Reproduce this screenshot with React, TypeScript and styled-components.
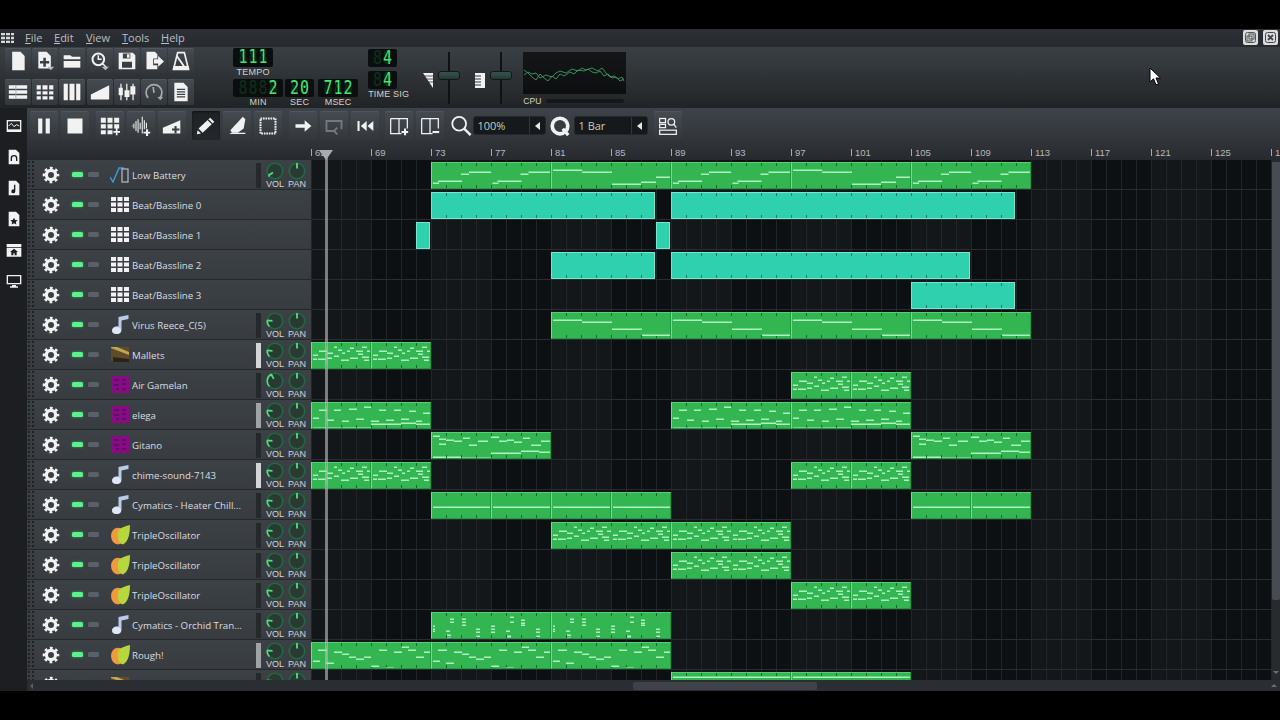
import React from 'react';
import styled, { createGlobalStyle } from 'styled-components';

const GlobalStyle = createGlobalStyle`
  html,
  body,
  #root {
    margin: 0;
    height: 100%;
    background: #000;
    overflow: hidden;
  }

  body {
    font-family: 'Open Sans', 'Liberation Sans', sans-serif;
    color: #c8cdd0;
  }
`;

const BAR = 15;

/* ---------- shell ---------- */

const Page = styled.div`
  position: relative;
  width: 1280px;
  height: 720px;
  padding: 29px 0;
  box-sizing: border-box;
  background: #000;
`;

const Window = styled.div`
  height: 662px;
  display: flex;
  flex-direction: column;
  background: #1d2023;
`;

const MenuBar = styled.div`
  height: 18px;
  flex-shrink: 0;
  box-sizing: border-box;
  display: flex;
  align-items: center;
  background: linear-gradient(#2d3135, #26292d);
  padding: 0 0 1px 1px;
`;

const MenuGrip = styled.div`
  width: 13px;
  height: 10px;
  margin-right: 11px;
  background:
    linear-gradient(90deg, transparent 4px, #26292d 4px, #26292d 5px, transparent 5px, transparent 9px, #26292d 9px, #26292d 10px, transparent 10px),
    repeating-linear-gradient(#d8d8d8 0 2px, #5a5d60 2px 4px);
`;

const MenuItem = styled.span<{ $width: number }>`
  width: ${(p) => p.$width}px;
  font-size: 11px;
  color: #b9bfc3;

  u {
    text-underline-offset: 1px;
  }
`;

const WindowButtons = styled.div`
  margin-left: auto;
  margin-right: 2px;
  display: flex;
  gap: 5px;
`;

const WindowButton = styled.div`
  width: 15px;
  height: 15px;
  border-radius: 2px;
  background: #d9dbdc;
  display: flex;
  align-items: center;
  justify-content: center;
`;

const TopBar = styled.div`
  height: 61px;
  flex-shrink: 0;
  box-sizing: border-box;
  display: flex;
  padding: 1px 0 0 5px;
  background: linear-gradient(#3a3f44, #33383c 30%, #212427);
`;

const ButtonGrid = styled.div`
  display: grid;
  grid-template-columns: repeat(7, 26px);
  grid-template-rows: 25px 26px;
  column-gap: 1.2px;
  row-gap: 6px;
`;

const IconButton = styled.div<{ $active?: boolean }>`
  box-sizing: border-box;
  display: flex;
  align-items: center;
  justify-content: center;
  border-radius: 2px;
  background: ${(p) => (p.$active ? 'linear-gradient(#1f2225, #24272b)' : 'linear-gradient(#454b51, #33373c)')};
  box-shadow: ${(p) => (p.$active ? 'inset 0 1px 2px #111' : 'inset 0 1px 0 #50565c')};
`;

/* ---------- lcd ---------- */

const LcdColumn = styled.div`
  margin-left: 39px;
  width: 125px;
  display: flex;
  flex-direction: column;
`;

const LcdRow = styled.div`
  display: flex;
  gap: 2px;
  margin-top: 2px;
`;

const LcdUnit = styled.div<{ $width: number }>`
  width: ${(p) => p.$width}px;
  margin-right: ${(p) => (p.$width === 29 ? 2 : 0)}px;
  display: flex;
  flex-direction: column;
  align-items: center;
`;

const LcdLabel = styled.span`
  font-family: 'Liberation Sans', sans-serif;
  font-size: 9px;
  line-height: 10px;
  letter-spacing: 0.2px;
  color: #d5d3c4;
`;

const LcdBox = styled.div<{ $height: number }>`
  align-self: stretch;
  height: ${(p) => p.$height}px;
  border-radius: 2px;
  background: #0b0e0e;
  display: flex;
  align-items: center;
  justify-content: center;
`;

const Digit = styled.span`
  position: relative;
  width: 10px;
  height: 13px;
  font-family: 'DejaVu Sans Mono', monospace;
  font-size: 15px;
  line-height: 13px;
  text-align: center;
  color: #45e36f;
  transform: scaleY(1.3);

  &::before {
    content: '8';
    position: absolute;
    left: 0;
    right: 0;
    z-index: -1;
    color: #10301d;
  }
`;

const Lcd = ({ digits, ghosts, height }: { digits: string; ghosts: number; height: number }) => (
  <LcdBox $height={height}>
    {Array.from({ length: ghosts }, (_, i) => (
      <Digit key={i} />
    ))}
    {digits.split('').map((d, i) => (
      <Digit key={i}>{d}</Digit>
    ))}
  </LcdBox>
);

const TimeSig = styled.div`
  margin-left: 10px;
  width: 29px;
  padding-top: 1px;
  display: flex;
  flex-direction: column;
  align-items: stretch;
  gap: 4px;
`;

const TimeSigLabel = styled(LcdLabel)`
  margin-top: -4px;
  white-space: nowrap;
`;

const FaderGroup = styled.div`
  margin-left: 26px;
  padding-top: 4px;
  display: flex;
  align-items: flex-start;
`;

const FaderIcon = styled.div`
  width: 10px;
  margin-top: 19px;
  margin-right: 5px;
`;

const Fader = styled.div`
  width: 22px;
  height: 52px;
  margin-right: 15px;
  padding-top: 19px;
  box-sizing: border-box;
  background: linear-gradient(#0f1113, #0f1113) center / 2px 100% no-repeat;
`;

const FaderHandle = styled.div`
  height: 9px;
  border-radius: 3px;
  border: 1px solid #14171a;
  box-sizing: border-box;
  background: linear-gradient(#3e4f49, #2a4c40 50%, #27332f);
`;

const CpuColumn = styled.div`
  margin-left: -4px;
  padding-top: 4px;
  width: 103px;
`;

const CpuGraph = styled.div`
  height: 42px;
  background: linear-gradient(#141618, #0c0e10);
`;

const CpuRow = styled.div`
  margin-top: 2px;
  display: flex;
  align-items: center;
  gap: 4px;
`;

const CpuLabel = styled(LcdLabel)`
  font-size: 8.5px;
`;

const CpuBar = styled.div`
  flex: 1;
  height: 4px;
  margin-right: 2px;
  border-radius: 2px;
  background: #15181a;
`;

/* ---------- body ---------- */

const Body = styled.div`
  flex: 1;
  min-height: 0;
  display: flex;
`;

const SideBar = styled.div`
  width: 27px;
  flex-shrink: 0;
  padding-top: 10px;
  box-sizing: border-box;
  background: #1c1e21;
  display: flex;
  flex-direction: column;
  align-items: center;
  gap: 15px;
`;

const Editor = styled.div`
  position: relative;
  flex: 1;
  min-width: 0;
  display: flex;
  flex-direction: column;
`;

const Dock = styled.div`
  height: 52px;
  flex-shrink: 0;
  background: linear-gradient(#3e4349, #33373c 55%, #26292d);
`;

const EditToolbar = styled.div`
  height: 37px;
  box-sizing: border-box;
  padding: 3px 0 0 3px;
  display: flex;
  align-items: flex-start;
  gap: 6.5px;
`;

const ToolGroup = styled.div`
  display: flex;
  gap: 3px;
`;

const ToolButton = styled(IconButton)`
  width: 28px;
  height: 29px;
`;

const ToolGlyph = styled.div<{ $width: number }>`
  width: ${(p) => p.$width}px;
  height: 29px;
  display: flex;
  align-items: center;
  justify-content: center;
`;

const ComboRow = styled.div`
  display: flex;
  align-items: flex-start;
  gap: 1px;
  margin-left: -1px;
`;

const Combo = styled.div<{ $width: number }>`
  width: ${(p) => p.$width}px;
  height: 19px;
  margin-top: 5px;
  box-sizing: border-box;
  display: flex;
  align-items: center;
  border-radius: 3px;
  border: 1px solid #24272b;
  background: #16191c;
  font-size: 11px;
  color: #c5cfb8;
  padding-left: 4px;
`;

const ComboArrow = styled.div`
  margin-left: auto;
  width: 15px;
  height: 100%;
  border-left: 1px solid #33373b;
  display: flex;
  align-items: center;
  justify-content: center;

  &::before {
    content: '';
    border: 4px solid transparent;
    border-left-width: 0;
    border-right: 5px solid #e6e6e6;
  }
`;

const Ruler = styled.div`
  height: 15px;
  padding-left: 284px;
  display: flex;
  overflow: hidden;
`;

const RulerMark = styled.div`
  width: 60px;
  flex-shrink: 0;
  display: flex;
  align-items: center;
  gap: 3px;
  font-family: 'Liberation Sans', sans-serif;
  font-size: 9.5px;
  color: #b4b9bc;

  &::before {
    content: '';
    width: 1px;
    height: 7px;
    background: #a6abae;
  }
`;

const Playhead = styled.div`
  position: absolute;
  left: 298px;
  top: 42px;
  bottom: 11px;
  width: 3px;
  background: rgba(190, 190, 190, 0.6);
  pointer-events: none;

  &::before {
    content: '';
    position: absolute;
    left: -6px;
    top: 0;
    border-left: 7.5px solid transparent;
    border-right: 7.5px solid transparent;
    border-top: 10px solid #a9acae;
  }
`;

const TrackArea = styled.div`
  flex: 1;
  min-height: 0;
  display: flex;
`;

const TrackList = styled.div`
  flex: 1;
  min-width: 0;
  overflow: hidden;
`;

const TrackRow = styled.div`
  height: 30px;
  display: flex;
`;

const TrackHeader = styled.div`
  width: 284px;
  flex-shrink: 0;
  box-sizing: border-box;
  display: flex;
  align-items: center;
  background: linear-gradient(#3c4146, #383c41);
  border-bottom: 1px solid #25282b;
`;

const Grip = styled.div`
  width: 8px;
  height: 100%;
  flex-shrink: 0;
  background: radial-gradient(circle, #1f2225 1px, transparent 1.2px) 0 0 / 4px 4px;
`;

const GearSlot = styled.div`
  width: 32px;
  flex-shrink: 0;
  display: flex;
  justify-content: center;
`;

const Led = styled.div<{ $on?: boolean }>`
  width: 11px;
  height: 5px;
  flex-shrink: 0;
  margin-left: 5px;
  border-radius: 1.5px;
  background: ${(p) => (p.$on ? '#5df08c' : '#596067')};
  box-shadow: ${(p) => (p.$on ? '0 0 3px #2ea65a' : 'none')};
`;

const TrackIcon = styled.div`
  width: 20px;
  height: 20px;
  margin-left: 11px;
  flex-shrink: 0;
  display: flex;
  align-items: center;
  justify-content: center;
`;

const TrackName = styled.div`
  width: 124px;
  margin-left: 2px;
  padding-top: 1px;
  flex-shrink: 0;
  font-size: 9.7px;
  white-space: nowrap;
  overflow: hidden;
  color: #d9dde0;
`;

const Meter = styled.div<{ $level: number }>`
  width: 5px;
  height: 25px;
  margin-top: 1px;
  flex-shrink: 0;
  background: ${(p) => (p.$level > 0.8 ? '#d3d5d6' : p.$level > 0 ? '#a0a2a4' : '#26292c')};
`;

const KnobGroup = styled.div`
  margin-left: 3px;
  display: flex;
`;

const Knob = styled.div`
  width: 22px;
  height: 29px;
  padding-top: 2px;
  box-sizing: border-box;
  flex-shrink: 0;
  display: flex;
  flex-direction: column;
  align-items: center;
`;

const KnobLabel = styled.span`
  font-family: 'Liberation Sans', sans-serif;
  font-size: 9px;
  line-height: 9px;
  color: #cfd5d6;
`;

const Lane = styled.div`
  flex: 1;
  box-sizing: border-box;
  padding: 2px 0 1px;
  display: grid;
  grid-template-columns: repeat(64, ${BAR}px);
  background:
    linear-gradient(#2a2d30, #2a2d30) 0 100% / 100% 1px no-repeat,
    linear-gradient(90deg, #222528 1px, transparent 1px) 0 0 / ${BAR}px 100%,
    repeating-linear-gradient(90deg, #14171a 0 60px, #0d1012 60px 120px);
`;

const ClipBox = styled.div<{ $start: number; $span: number; $teal: boolean }>`
  grid-row: 1;
  grid-column: ${(p) => p.$start + 1} / span ${(p) => p.$span};
  height: 27px;
  box-sizing: border-box;
  margin-right: ${(p) => (p.$teal ? 1 : 0)}px;
  background: ${(p) => (p.$teal ? '#2fd0ae' : '#33b652')};
  border: 1px solid ${(p) => (p.$teal ? '#74e6cf' : '#1f9a41')};
  border-left-color: ${(p) => (p.$teal ? '#74e6cf' : '#66e586')};
  border-top-color: ${(p) => (p.$teal ? '#74e6cf' : '#54cf72')};
  overflow: hidden;
`;

const VScroll = styled.div`
  width: 8px;
  flex-shrink: 0;
  background: #282b2e;
  display: flex;
  flex-direction: column;
  align-items: center;
`;

const VThumb = styled.div`
  width: 8px;
  height: 438px;
  margin-top: 2px;
  margin-bottom: 71px;
  border-radius: 0 0 2px 2px;
  background: #474c52;
`;

const VArrow = styled.div`
  border: 3px solid transparent;
  border-bottom-width: 0;
  border-top: 3px solid #6a6e72;
`;

const HScroll = styled.div`
  height: 11px;
  flex-shrink: 0;
  padding: 0 3px;
  display: flex;
  align-items: center;
  background: #2a2d31;
`;

const HThumb = styled.div`
  margin-left: 600px;
  width: 184px;
  height: 8px;
  border-radius: 2px;
  background: #3f4349;
`;

const ScrollArrow = styled.div`
  border: 3px solid transparent;
  border-left-width: 0;
  border-right: 3px solid #5b5f63;
`;

const ScrollArrowEnd = styled.div`
  margin-left: auto;
  border: 3px solid transparent;
  border-top-width: 0;
  border-bottom: 3px solid #6a6e72;
`;

const Pointer = styled.svg`
  position: absolute;
  left: 1149px;
  top: 67px;
`;

/* ---------- icons ---------- */

const W = '#f2f2f2';
const D = '#3a3f44';

const Svg = ({ size = 20, children }: { size?: number; children: React.ReactNode }) => (
  <svg width={size} height={size} viewBox="0 0 24 24">
    {children}
  </svg>
);

const ICONS: Record<string, React.ReactNode> = {
  doc: <path fill={W} d="M5 1h10l5 5v17H5z" />,
  docPlus: (
    <>
      <path fill={W} d="M4 1h10l5 5v15H4z" />
      <path fill={D} d="M10 8h3v4h4v3h-4v4h-3v-4H6v-3h4z" />
      <path fill="#b8bcc0" d="M15 19h8l-4 4z" />
    </>
  ),
  folder: (
    <>
      <path fill={W} d="M2 5h8l2 2h10v3H2z" />
      <path fill={W} d="M2 12h20v8H2z" />
    </>
  ),
  recent: (
    <>
      <circle cx="10" cy="10" r="7" fill="none" stroke={W} strokeWidth="2.4" />
      <path fill="none" stroke={W} strokeWidth="1.8" d="M10 5v5h4M15 15l5 5" />
      <path fill="#b8bcc0" d="M14 19h9l-4.500 4z" />
    </>
  ),
  save: (
    <path
      fill={W}
      fillRule="evenodd"
      d="M2 2h17l3 3v17H2zM7 3v6h9V3zM6 13v7h12v-7zM12 4h3v4h-3z"
    />
  ),
  export: (
    <>
      <path fill={W} d="M3 1h10l3 3v5h-5v8h5v5H3z" />
      <path fill={W} d="M12 10h5V6l7 6.500-7 6.500v-4h-5z" />
    </>
  ),
  metronome: (
    <>
      <path fill="none" stroke={W} strokeWidth="2" d="M8 2h8l5 20H3z" />
      <path fill={W} d="M3 18h18l1 4H2z" />
      <path stroke={W} strokeWidth="2.200" d="M7 6l9 13" />
    </>
  ),
  song: (
    <>
      <path fill={W} d="M1 4h22v4H1zM1 10h22v4H1zM1 16h22v4H1z" />
      <path fill="#9ea2a6" d="M9 4h1v16H9z" />
    </>
  ),
  bb: <path fill={W} d="M2 4h5v5H2zM9 4h6v5H9zM17 4h5v5h-5zM2 11h5v4H2zM9 11h6v4H9zM17 11h5v4h-5zM2 17h5v4H2zM9 17h6v4H9zM17 17h5v4h-5z" />,
  piano: <path fill={W} d="M2 2h5v20H2zM9 2h6v20H9zM17 2h5v20h-5z" />,
  ramp: <path fill={W} d="M1 15L23 4v17H1z" />,
  mixer: (
    <path
      fill={W}
      d="M4 2h1.500v5H7v9H5.500v6H4v-6H2V7h2zM11 2h1.500v8H15v8h-2.500v4H11v-4H9v-8h2zM18.500 2H20v3h2v10h-2v7h-1.500v-7H16V5h2.500z"
    />
  ),
  gauge: (
    <>
      <path fill="none" stroke="#a6abaf" strokeWidth="2" d="M5 19a9.500 9.500 0 1 1 14 0" />
      <path fill="none" stroke="#a6abaf" strokeWidth="2" d="M12 13l-1-7" />
      <path fill="#a6abaf" d="M16 18h7l-3.500 4z" />
    </>
  ),
  notes: (
    <path
      fill={W}
      fillRule="evenodd"
      d="M4 1h11l5 5v17H4zM7 8v1.500h10V8zM7 11v1.500h10V11zM7 14v1.500h10V14zM7 17v1.500h10V17z"
    />
  ),
  pause: <path fill={W} d="M5 3h5v18H5zM14 3h5v18h-5z" />,
  stop: <path fill={W} d="M3 3h18v18H3z" />,
  bbPlus: (
    <path
      fill={W}
      d="M1 2h6v6H1zM9 2h6v6H9zM17 2h6v6h-6zM1 10h6v5H1zM9 10h6v5H9zM17 10h6v5h-6zM1 17h6v5H1zM9 17h6v5H9zM19 15h2v3h3v2h-3v3h-2v-3h-3v-2h3z"
    />
  ),
  wavePlus: (
    <>
      <path
        fill="none"
        stroke={W}
        strokeWidth="1.300"
        d="M1 12h1M3.500 9v6M6 6v12M8.500 4v16M11 8v8M13.500 1v20M16 5v11M18.500 8v7"
      />
      <path fill={W} d="M18 16h2.500v3H23v2h-2.500v3H18v-3h-3v-2h3z" />
    </>
  ),
  rampPlus: (
    <>
      <path fill={W} d="M1 14L22 5v16H1z" />
      <path fill={D} d="M15 12h2.500v3H21v2.500h-3.500V21H15v-3.500h-3V15h3z" />
    </>
  ),
  pencil: (
    <>
      <path fill={W} d="M17 2l5 5L8 20l-5-5z" />
      <path fill={W} d="M1 22l1-5 4 4z" />
      <path stroke="#1f2225" strokeWidth="1.500" d="M14.500 4.500l5 5" />
    </>
  ),
  eraser: (
    <>
      <path fill={W} d="M19 1l3 3-2 11-7 5H6l-2-3z" />
      <path fill={W} d="M1 23l4-3h17v1.500H3z" />
    </>
  ),
  select: <rect x="3" y="3" width="18" height="18" fill="none" stroke={W} strokeWidth="2.400" strokeDasharray="2 1" />,
  arrow: <path fill={W} d="M3 10h11V5l8 7-8 7v-5H3z" />,
  loop: (
    <path
      fill="none"
      stroke="#74797d"
      strokeWidth="2.200"
      d="M21 16V6H3v12h10M16 14l-4 4 4 4"
    />
  ),
  skip: <path fill={W} d="M3 6h2.500v12H3zM14 6v12l-7-6zM22 6v12l-7-6z" />,
  addBar: (
    <>
      <path fill="none" stroke={W} strokeWidth="1.500" d="M2 3h20v12M12 3v18M2 3v18h13" />
      <path fill={W} d="M18 15h2.500v3H23v2.500h-2.500V23H18v-2.500h-3V18h3z" />
    </>
  ),
  removeBar: (
    <>
      <path fill="none" stroke={W} strokeWidth="1.500" d="M2 3h20v12M12 3v18M2 3v18h13" />
      <path fill={W} d="M15 18h8v2.500h-8z" />
    </>
  ),
  magnifier: (
    <>
      <circle cx="10" cy="10" r="7.500" fill="none" stroke={W} strokeWidth="2" />
      <path stroke={W} strokeWidth="2.600" d="M15.500 15.500l7 7" />
    </>
  ),
  quantize: (
    <>
      <circle cx="12" cy="12" r="8.500" fill="none" stroke={W} strokeWidth="4" />
      <path stroke={W} strokeWidth="3.500" d="M15 15l6 7" />
    </>
  ),
  stack: (
    <>
      <rect x="2" y="3" width="7" height="5" fill="none" stroke={W} strokeWidth="1.500" />
      <rect x="2" y="10" width="7" height="4" fill="none" stroke={W} strokeWidth="1.500" />
      <rect x="2" y="17" width="20" height="5" fill="none" stroke={W} strokeWidth="1.500" />
      <circle cx="16" cy="7" r="4" fill="none" stroke={W} strokeWidth="1.500" />
      <path stroke={W} strokeWidth="1.500" d="M19 10l3 4" />
    </>
  ),
};

const Gear = () => (
  <svg width="18" height="18" viewBox="0 0 18 18">
    <circle cx="9" cy="9" r="4.600" fill="none" stroke={W} strokeWidth="3.200" />
    <circle
      cx="9"
      cy="9"
      r="7"
      fill="none"
      stroke={W}
      strokeWidth="2.600"
      strokeDasharray="2.750 2.750"
      strokeDashoffset="1.370"
    />
  </svg>
);

const NoteIcon = () => (
  <svg width="19" height="20" viewBox="0 0 18 20">
    <path fill="#b9cbe8" d="M7 2l10-2v4l-7 1.500V15a4.500 3.800 0 1 1-3-3.500z" />
    <ellipse cx="5" cy="15.500" rx="4.500" ry="3.500" fill="#dfe7f5" />
  </svg>
);

const BeatIcon = () => (
  <svg width="18" height="15" viewBox="0 0 18 15">
    <path fill={W} d="M0 0h5v4H0zM6.500 0h5v4h-5zM13 0h5v4h-5zM0 5.500h5v4H0zM6.500 5.500h5v4h-5zM13 5.500h5v4h-5zM0 11h5v4H0zM6.500 11h5v4h-5zM13 11h5v4h-5z" />
  </svg>
);

const AutomationIcon = () => (
  <svg width="20" height="16" viewBox="0 0 20 16">
    <path fill="none" stroke="#3d9bd6" strokeWidth="1.400" d="M0 10l3 5L9 1h5" />
    <rect x="12" y="2" width="6" height="13" fill="none" stroke="#b6bdc2" strokeWidth="1.200" />
  </svg>
);

const MalletsIcon = () => (
  <svg width="18" height="17" viewBox="0 0 18 17">
    <rect width="18" height="14" y="1" fill="#5e4c2c" />
    <path fill="#c4a550" d="M0 2l18 7V6L6 1H0z" />
    <path fill="#2a2418" d="M2 11l16 2v3H2z" />
  </svg>
);

const GamelanIcon = () => (
  <svg width="18" height="17" viewBox="0 0 18 17">
    <rect width="18" height="17" fill="#8a0a86" />
    <path fill="#5a1262" d="M3 3h5v2H3zM3 8h5v2H3zM11 3h4v2h-4zM11 7h4v2h-4zM5 12h3v2H5zM11 12h4v2h-4z" />
  </svg>
);

const TripleIcon = () => (
  <svg width="19" height="20" viewBox="0 0 18 19">
    <ellipse cx="6.500" cy="10.500" rx="6.500" ry="8" fill="#ee9a3d" />
    <path fill="#b7d83d" d="M18 0c0 9-2 17-7 18.500C6 17 5 8 8 4c3-2 6-3 10-4z" />
  </svg>
);

const polar = (angle: number, radius: number) => {
  const a = ((angle - 90) * Math.PI) / 180;
  return `${(9 + radius * Math.cos(a)).toFixed(2)} ${(9 + radius * Math.sin(a)).toFixed(2)}`;
};

const Dial = ({ angle, arc }: { angle: number; arc: boolean }) => (
  <svg width="18" height="18" viewBox="0 0 18 18" style={{ flexShrink: 0 }}>
    <circle cx="9" cy="9" r="7.800" fill="#2a3a33" stroke="#1e6a42" strokeWidth="1.600" />
    {arc && <path fill="none" stroke="#4fe07f" strokeWidth="1.600" d={`M${polar(-135, 7.8)}A7.800 7.800 0 0 1 ${polar(angle, 7.8)}`} />}
    <path stroke="#4fe07f" strokeWidth="1.800" d={`M${polar(angle, 8)}L${polar(angle, 2.5)}`} />
  </svg>
);

const Knobs = ({ volume, labels }: { volume: number; labels: boolean }) => (
  <KnobGroup>
    <Knob>
      <Dial angle={volume} arc />
      {labels && <KnobLabel>VOL</KnobLabel>}
    </Knob>
    <Knob>
      <Dial angle={0} arc={false} />
      {labels && <KnobLabel>PAN</KnobLabel>}
    </Knob>
  </KnobGroup>
);

/* ---------- clip content ---------- */

type Note = [number, number, number];

const repeat = (notes: Note[], times: number, step: number): Note[] =>
  Array.from({ length: times }).flatMap((_, i) => notes.map(([x, y, w]): Note => [x + i * step, y, w]));

const LEAD_A: Note[] = repeat([[1, 21, 6], [6, 19, 24], [29, 12, 8], [37, 10, 22]], 2, 59.5);
const LEAD_B: Note[] = [[1, 8, 29], [30, 10, 30], [60, 22, 29], [89, 20, 15], [104, 15, 14]];
const REECE: Note[] = [[1, 8, 29], [30, 10, 30], [60, 17, 30], [90, 23, 28]];

const DENSE_SET: Note[] = [
  [1, 13, 5], [7, 9, 8], [15, 11, 6], [1, 17, 4], [6, 17, 8], [15, 16, 5], [22, 5, 3], [26, 8, 4], [30, 11, 3],
  [35, 9, 3], [38, 6, 4], [44, 9, 7], [50, 5, 5], [22, 14, 5], [29, 18, 8], [38, 16, 8], [46, 12, 5], [50, 15, 7],
  [55, 9, 4], [52, 18, 5],
];

const ELEGA: Note[] = [
  [1, 16, 6], [7, 8, 8], [15, 18, 7], [22, 8, 7], [30, 19, 7], [37, 7, 8], [44, 17, 8], [52, 5, 7], [59, 19, 8],
  [67, 8, 7], [74, 18, 8], [82, 8, 7], [89, 17, 8], [97, 9, 7], [104, 19, 6], [111, 11, 7], [1, 26, 14], [16, 26, 14],
  [31, 26, 13], [45, 26, 14], [59, 22, 30], [89, 21, 15], [104, 22, 14],
];

const GITANO: Note[] = [
  [1, 4, 7], [7, 7, 7], [14, 8, 8], [7, 12, 7], [22, 9, 8], [31, 6, 7], [37, 13, 8], [46, 9, 10], [59, 5, 8], [67, 9, 8],
  [75, 8, 7], [82, 10, 8], [91, 6, 7], [99, 13, 10], [109, 9, 9], [1, 25, 13], [15, 25, 14], [30, 26, 14], [45, 26, 14],
  [59, 21, 30], [89, 19, 18], [107, 20, 11],
];

const STACKS: Note[] = [
  [1, 14, 2], [1, 17, 2], [1, 19, 2], [14, 19, 4], [15, 23, 4], [15, 26, 4], [18, 7, 4], [18, 10, 4], [30, 7, 4], [30, 10, 4],
  [30, 13, 4], [44, 17, 4], [44, 20, 4], [44, 24, 4], [59, 14, 4], [59, 17, 4], [59, 20, 4], [74, 19, 4], [75, 24, 4],
  [75, 26, 4], [78, 5, 4], [78, 10, 4], [89, 8, 4], [89, 11, 4], [89, 13, 4], [104, 17, 4], [104, 20, 4], [104, 24, 4],
];

const ROUGH: Note[] = [
  [1, 19, 7], [6, 8, 9], [14, 21, 8], [22, 10, 8], [30, 12, 7], [37, 15, 7], [44, 17, 8], [52, 15, 7], [59, 24, 8],
  [67, 8, 8], [74, 26, 8], [82, 10, 8], [90, 5, 7], [96, 8, 8], [104, 15, 8], [112, 10, 6],
];

const PATTERNS: Record<string, Note[]> = {
  leadA: LEAD_A,
  leadB: LEAD_B,
  reece: REECE,
  dense: DENSE_SET,
  denseWide: repeat(DENSE_SET, 2, 60),
  elega: ELEGA,
  gitano: GITANO,
  line: [[1, 15, 58]],
  stacks: STACKS,
  rough: ROUGH,
  low: [[1, 5, 29], [30, 5, 30], [60, 5, 30], [90, 5, 28]],
  empty: [],
};

const Clip = ({ start, span, pattern }: { start: number; span: number; pattern: string }) => {
  const teal = pattern === 'empty';
  const width = span * BAR;
  const tick = teal ? '#11806b' : '#14692f';
  const ticks = Array.from({ length: span - 1 }, (_, i) => (i + 1) * BAR - 1);
  return (
    <ClipBox $start={start} $span={span} $teal={teal}>
      <svg width={width} height={25} style={{ display: 'block' }}>
        {ticks.map((x) => (
          <path key={x} stroke={tick} strokeWidth="1" d={`M${x + 0.5} 0v3M${x + 0.5} 22v3`} />
        ))}
        {PATTERNS[pattern].map(([x, y, w], i) => (
          <rect key={i} x={x} y={y - 1.5} width={w} height={1.5} fill="#aef2be" />
        ))}
      </svg>
    </ClipBox>
  );
};

/* ---------- data ---------- */

type ClipData = [number, number, string];

type Track = {
  name: string;
  icon: React.ReactNode;
  controls?: boolean;
  level?: number;
  volume?: number;
  clips: ClipData[];
};

const TRACKS: Track[] = [
  {
    name: 'Low Battery',
    icon: <AutomationIcon />,
    controls: true,
    volume: -125,
    clips: [[8, 8, 'leadA'], [16, 8, 'leadB'], [24, 8, 'leadA'], [32, 8, 'leadB'], [40, 8, 'leadA']],
  },
  { name: 'Beat/Bassline 0', icon: <BeatIcon />, clips: [[8, 15, 'empty'], [24, 23, 'empty']] },
  { name: 'Beat/Bassline 1', icon: <BeatIcon />, clips: [[7, 1, 'empty'], [23, 1, 'empty']] },
  { name: 'Beat/Bassline 2', icon: <BeatIcon />, clips: [[16, 7, 'empty'], [24, 20, 'empty']] },
  { name: 'Beat/Bassline 3', icon: <BeatIcon />, clips: [[40, 7, 'empty']] },
  {
    name: 'Virus Reece_C(5)',
    icon: <NoteIcon />,
    controls: true,
    clips: [[16, 8, 'reece'], [24, 8, 'reece'], [32, 8, 'reece'], [40, 8, 'reece']],
  },
  { name: 'Mallets', icon: <MalletsIcon />, controls: true, level: 1, clips: [[0, 4, 'dense'], [4, 4, 'dense']] },
  { name: 'Air Gamelan', icon: <GamelanIcon />, controls: true, volume: -30, clips: [[32, 4, 'dense'], [36, 4, 'dense']] },
  { name: 'elega', icon: <GamelanIcon />, controls: true, level: 0.6, clips: [[0, 8, 'elega'], [24, 8, 'elega'], [32, 8, 'elega']] },
  { name: 'Gitano', icon: <GamelanIcon />, controls: true, clips: [[8, 8, 'gitano'], [40, 8, 'gitano']] },
  { name: 'chime-sound-7143', icon: <NoteIcon />, controls: true, level: 1, clips: [[0, 4, 'dense'], [4, 4, 'dense'], [32, 4, 'dense'], [36, 4, 'dense']] },
  {
    name: 'Cymatics - Heater Chill...',
    icon: <NoteIcon />,
    controls: true,
    clips: [[8, 4, 'line'], [12, 4, 'line'], [16, 4, 'line'], [20, 4, 'line'], [40, 4, 'line'], [44, 4, 'line']],
  },
  { name: 'TripleOscillator', icon: <TripleIcon />, controls: true, clips: [[16, 8, 'denseWide'], [24, 8, 'denseWide']] },
  { name: 'TripleOscillator', icon: <TripleIcon />, controls: true, clips: [[24, 8, 'denseWide']] },
  { name: 'TripleOscillator', icon: <TripleIcon />, controls: true, clips: [[32, 4, 'dense'], [36, 4, 'dense']] },
  { name: 'Cymatics - Orchid Tran...', icon: <NoteIcon />, controls: true, clips: [[8, 8, 'stacks'], [16, 8, 'stacks']] },
  { name: 'Rough!', icon: <TripleIcon />, controls: true, level: 0.6, clips: [[0, 8, 'rough'], [8, 8, 'rough'], [16, 8, 'rough']] },
  { name: '', icon: <MalletsIcon />, controls: true, clips: [[24, 8, 'low'], [32, 8, 'low']] },
];

const MENUS: [string, string, number][] = [
  ['F', 'ile', 29],
  ['E', 'dit', 32],
  ['V', 'iew', 36],
  ['T', 'ools', 39],
  ['H', 'elp', 40],
];

const TOP_BUTTONS = ['doc', 'docPlus', 'folder', 'recent', 'save', 'export', 'metronome', 'song', 'bb', 'piano', 'ramp', 'mixer', 'gauge', 'notes'];

const TOOL_GROUPS = [
  ['pause', 'stop'],
  ['bbPlus', 'wavePlus', 'rampPlus'],
  ['pencil', 'eraser', 'select'],
  ['arrow', 'loop', 'skip'],
  ['addBar', 'removeBar'],
];

const CPU_A = '0,6 4,9 8,13 12,16 16,10 20,14 24,17 28,12 32,15 36,10 40,12 46,8 50,10 54,6 60,7 64,5 68,8 72,9 76,7 80,12 84,10 88,14 92,13 96,17 100,15';
const CPU_B = '0,11 4,8 8,10 12,9 16,14 22,11 28,13 32,9 36,7 42,9 48,5 54,7 58,4 62,6 68,4 74,7 78,4 82,9 86,13 90,12 94,15 98,13 100,17';

const SIDE_ICONS: React.ReactNode[] = [
  <>
    <rect x="1" y="3" width="22" height="18" fill={W} />
    <rect x="3" y="5" width="18" height="12" fill="#23262a" />
    <path fill="none" stroke={W} strokeWidth="1.500" d="M4 12l4-4 4 5 4-3 4 2" />
  </>,
  <>
    <path fill={W} d="M4 1h11l5 5v17H4z" />
    <path fill="none" stroke="#1c1e21" strokeWidth="2" d="M8 18v-4a4 4 0 0 1 8 0v4" />
  </>,
  <>
    <path fill={W} d="M4 1h11l5 5v17H4z" />
    <path fill="#1c1e21" d="M12 7h2v10a3 3 0 1 1-2-2.800z" />
  </>,
  <>
    <path fill={W} d="M4 1h11l5 5v17H4z" />
    <path fill="#1c1e21" d="M12 10l1.800 3.500 3.700.5-2.700 2.600.7 3.700-3.500-1.800-3.500 1.800.7-3.700L6.500 14l3.700-.5z" />
  </>,
  <>
    <path fill={W} d="M1 3h22v5H1zM1 9h22v13H1z" />
    <path fill="#1c1e21" d="M12 10l6 5h-2v5h-3v-3h-2v3H8v-5H6z" />
  </>,
  <>
    <path fill="none" stroke={W} strokeWidth="2" d="M2 4h20v12H2z" />
    <path fill={W} d="M9 18h6v2h3v2H6v-2h3z" />
  </>,
];

const App = () => (
  <React.Fragment>
    <GlobalStyle />
    <Page>
      <Window>
        <MenuBar>
          <MenuGrip />
          {MENUS.map(([key, rest, width]) => (
            <MenuItem key={key} $width={width}>
              <u>{key}</u>
              {rest}
            </MenuItem>
          ))}
          <WindowButtons>
            <WindowButton>
              <svg width="11" height="11" viewBox="0 0 11 11">
                <rect x="0.500" y="0.500" width="10" height="10" rx="2" fill="none" stroke="#555" />
                <rect x="4" y="2" width="5" height="5" fill="none" stroke="#555" />
                <rect x="2" y="4" width="5" height="5" fill="none" stroke="#555" />
              </svg>
            </WindowButton>
            <WindowButton>
              <svg width="11" height="11" viewBox="0 0 11 11">
                <rect x="0.500" y="0.500" width="10" height="10" rx="2" fill="none" stroke="#444" />
                <path stroke="#444" strokeWidth="1.800" d="M3 3l5 5M8 3l-5 5" />
              </svg>
            </WindowButton>
          </WindowButtons>
        </MenuBar>

        <TopBar>
          <ButtonGrid>
            {TOP_BUTTONS.map((name) => (
              <IconButton key={name}>
                <Svg>{ICONS[name]}</Svg>
              </IconButton>
            ))}
          </ButtonGrid>

          <LcdColumn>
            <LcdUnit $width={40}>
              <Lcd digits="111" ghosts={0} height={19} />
              <LcdLabel>TEMPO</LcdLabel>
            </LcdUnit>
            <LcdRow>
              <LcdUnit $width={50}>
                <Lcd digits="2" ghosts={3} height={18} />
                <LcdLabel>MIN</LcdLabel>
              </LcdUnit>
              <LcdUnit $width={29}>
                <Lcd digits="20" ghosts={0} height={18} />
                <LcdLabel>SEC</LcdLabel>
              </LcdUnit>
              <LcdUnit $width={40}>
                <Lcd digits="712" ghosts={0} height={18} />
                <LcdLabel>MSEC</LcdLabel>
              </LcdUnit>
            </LcdRow>
          </LcdColumn>

          <TimeSig>
            <Lcd digits="4" ghosts={1} height={18} />
            <Lcd digits="4" ghosts={1} height={18} />
            <TimeSigLabel>TIME SIG</TimeSigLabel>
          </TimeSig>

          <FaderGroup>
            <FaderIcon>
              <svg width="10" height="15" viewBox="0 0 10 15">
                <path fill={W} d="M0 0h10v15z" />
                <path stroke="#30343a" strokeWidth="0.800" d="M0 3h10M0 6h10M0 9h10" />
              </svg>
            </FaderIcon>
            <Fader>
              <FaderHandle />
            </Fader>
            <FaderIcon>
              <svg width="10" height="15" viewBox="0 0 10 15">
                <path fill={W} d="M0 0h10v15H0z" />
                <path stroke="#30343a" strokeWidth="1" d="M0 3h6M0 6h6M0 9h6M0 12h6" />
              </svg>
            </FaderIcon>
            <Fader>
              <FaderHandle />
            </Fader>
          </FaderGroup>

          <CpuColumn>
            <CpuGraph>
              <svg width="103" height="42" viewBox="-1 -12 103 42">
                <polyline points={CPU_A} fill="none" stroke="#3f9a63" strokeWidth="0.900" />
                <polyline points={CPU_B} fill="none" stroke="#3f9a63" strokeWidth="0.900" />
              </svg>
            </CpuGraph>
            <CpuRow>
              <CpuLabel>CPU</CpuLabel>
              <CpuBar />
            </CpuRow>
          </CpuColumn>
        </TopBar>

        <Body>
          <SideBar>
            {SIDE_ICONS.map((icon, i) => (
              <Svg key={i} size={16}>
                {icon}
              </Svg>
            ))}
          </SideBar>

          <Editor>
            <Dock>
              <EditToolbar>
                {TOOL_GROUPS.map((group) => (
                  <ToolGroup key={group[0]}>
                    {group.map((name) => (
                      <ToolButton key={name} $active={name === 'pencil'}>
                        <Svg>{ICONS[name]}</Svg>
                      </ToolButton>
                    ))}
                  </ToolGroup>
                ))}
                <ComboRow>
                  <ToolGlyph $width={22}>
                    <Svg size={23}>{ICONS.magnifier}</Svg>
                  </ToolGlyph>
                  <Combo $width={73}>
                    100%
                    <ComboArrow />
                  </Combo>
                  <ToolGlyph $width={26}>
                    <Svg size={22}>{ICONS.quantize}</Svg>
                  </ToolGlyph>
                  <Combo $width={74}>
                    1 Bar
                    <ComboArrow />
                  </Combo>
                </ComboRow>
                <ToolButton>
                  <Svg>{ICONS.stack}</Svg>
                </ToolButton>
              </EditToolbar>
              <Ruler>
                {Array.from({ length: 17 }, (_, i) => (
                  <RulerMark key={i}>{65 + i * 4}</RulerMark>
                ))}
              </Ruler>
            </Dock>

            <TrackArea>
              <TrackList>
                {TRACKS.map((track, i) => (
                  <TrackRow key={i}>
                    <TrackHeader>
                      <Grip />
                      <GearSlot>
                        <Gear />
                      </GearSlot>
                      <Led $on />
                      <Led />
                      <TrackIcon>{track.icon}</TrackIcon>
                      <TrackName>{track.name}</TrackName>
                      {track.controls && (
                        <>
                          <Meter $level={track.level ?? 0} />
                          <Knobs volume={track.volume ?? -85} labels={track.name !== ''} />
                        </>
                      )}
                    </TrackHeader>
                    <Lane>
                      {track.clips.map(([start, span, pattern]) => (
                        <Clip key={start} start={start} span={span} pattern={pattern} />
                      ))}
                    </Lane>
                  </TrackRow>
                ))}
              </TrackList>
              <VScroll>
                <VThumb />
                <VArrow />
              </VScroll>
            </TrackArea>

            <HScroll>
              <ScrollArrow />
              <HThumb />
              <ScrollArrowEnd />
            </HScroll>
            <Playhead />
          </Editor>
        </Body>
      </Window>

      <Pointer width="12" height="19" viewBox="0 0 12 19">
        <path fill="#fff" stroke="#000" strokeWidth="1" d="M1 1v14l3.500-3.200 2.500 6 2.500-1-2.500-5.800h4.500z" />
      </Pointer>
    </Page>
  </React.Fragment>
);

export default App;
